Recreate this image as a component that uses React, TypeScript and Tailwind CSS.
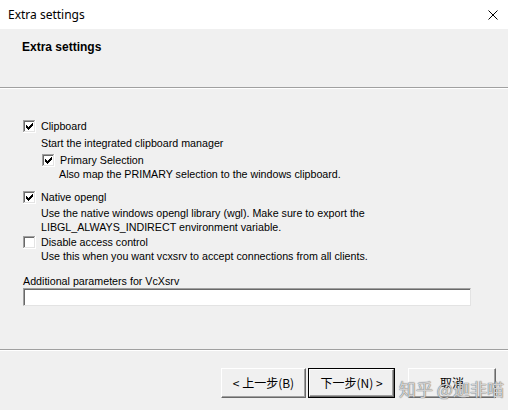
import type { ReactNode } from 'react'

const body = "font-['Liberation_Sans',Arial,sans-serif] text-[10.7px] text-black"

function CheckBox({ checked }: { checked: boolean }) {
  // classic sunken 13x13 checkbox with pixel tick
  const tick: [number, number][] = [
    [9, 3],
    [8, 4], [9, 4],
    [3, 5], [7, 5], [8, 5], [9, 5],
    [3, 6], [4, 6], [6, 6], [7, 6], [8, 6],
    [3, 7], [4, 7], [5, 7], [6, 7], [7, 7],
    [4, 8], [5, 8], [6, 8],
    [5, 9],
  ]
  return (
    <svg width="13" height="13" viewBox="0 0 13 13" shapeRendering="crispEdges" className="shrink-0">
      <rect x="0" y="0" width="13" height="13" fill="#ffffff" />
      <rect x="0" y="0" width="12" height="1" fill="#a0a0a0" />
      <rect x="0" y="0" width="1" height="12" fill="#a0a0a0" />
      <rect x="1" y="1" width="10" height="1" fill="#696969" />
      <rect x="1" y="1" width="1" height="10" fill="#696969" />
      <rect x="1" y="11" width="11" height="1" fill="#e3e3e3" />
      <rect x="11" y="1" width="1" height="11" fill="#e3e3e3" />
      {checked && tick.map(([x, y]) => <rect key={`${x}-${y}`} x={x} y={y} width="1" height="1" fill="#000" />)}
    </svg>
  )
}

function CheckRow({ checked, label, className = '' }: { checked: boolean; label: string; className?: string }) {
  return (
    <div className={`flex items-center h-[13px] ${className}`}>
      <CheckBox checked={checked} />
      <span className="ml-[5px] leading-[13px] whitespace-nowrap">{label}</span>
    </div>
  )
}

function Line({ children, className = '' }: { children: ReactNode; className?: string }) {
  return <div className={`leading-[14px] h-[14px] whitespace-nowrap ${className}`}>{children}</div>
}

function WinButton({ children, isDefault = false, width }: { children: ReactNode; isDefault?: boolean; width: string }) {
  return (
    <div className={`${width} h-[30px] ${isDefault ? 'border border-black' : ''}`}>
      <div className="h-full w-full border border-t-white border-l-white border-r-[#696969] border-b-[#696969] bg-[#f0f0f0] shadow-[inset_-1px_-1px_0_#a0a0a0] flex items-center justify-center font-['Noto_Sans_CJK_SC',sans-serif] text-[12px] text-black whitespace-pre">
        {children}
      </div>
    </div>
  )
}

export default function App() {
  return (
    <div className="relative w-[508px] h-[410px] bg-[#f0f0f0] overflow-hidden flex flex-col">
      {/* Title bar */}
      <div className="h-[29px] bg-white flex items-center justify-between pl-2 pr-[10px] shrink-0">
        <span className="font-['Noto_Sans',sans-serif] text-[12px] text-black">Extra settings</span>
        <svg width="10" height="10" viewBox="0 0 10 10">
          <path d="M0.5 0.5 L9.5 9.5 M9.5 0.5 L0.5 9.5" stroke="#000" strokeWidth="1" />
        </svg>
      </div>

      {/* Header */}
      <div className="h-[58px] shrink-0 pl-[22px] pt-[11px]">
        <div className="font-['Liberation_Sans',Arial,sans-serif] font-bold text-[12px] leading-[14px] text-black">
          Extra settings
        </div>
      </div>
      <div className="h-[2px] shrink-0 border-t border-t-[#a0a0a0] border-b border-b-white" />

      {/* Content */}
      <div className={`h-[260px] shrink-0 pl-[23px] pt-[31px] ${body}`}>
        <CheckRow checked label="Clipboard" />
        <Line className="ml-[18px] mt-[3px]">Start the integrated clipboard manager</Line>
        <CheckRow checked label="Primary Selection" className="ml-[19px] mt-[4px]" />
        <Line className="ml-[36px]">Also map the PRIMARY selection to the windows clipboard.</Line>
        <CheckRow checked label="Native opengl" className="mt-[10px]" />
        <Line className="ml-[18px] mt-[2px]">Use the native windows opengl library (wgl). Make sure to export the</Line>
        <Line className="ml-[18px]">LIBGL_ALWAYS_INDIRECT environment variable.</Line>
        <CheckRow checked={false} label="Disable access control" className="mt-[2px]" />
        <Line className="ml-[18px]">Use this when you want vcxsrv to accept connections from all clients.</Line>
        <Line className="mt-[11px]">Additional parameters for VcXsrv</Line>
        <div className="w-[448px] h-[18px] bg-white border border-t-[#a0a0a0] border-l-[#a0a0a0] border-r-[#e3e3e3] border-b-[#e3e3e3] shadow-[inset_1px_1px_0_#696969]" />
      </div>

      <div className="h-[2px] shrink-0 border-t border-t-[#a0a0a0] border-b border-b-white" />

      {/* Footer buttons */}
      <div className="flex-1 flex justify-end items-start pt-[17px] pr-[12px]">
        <WinButton width="w-[85px]">{'< 上一步(B)'}</WinButton>
        <div className="ml-[2px]">
          <WinButton width="w-[87px]" isDefault>{'下一步(N) >'}</WinButton>
        </div>
        <div className="ml-[13px]">
          <WinButton width="w-[88px]">取消</WinButton>
        </div>
      </div>

      {/* Watermark overlay */}
      <div className="absolute left-[399px] top-[379px] font-['Noto_Sans_CJK_SC',sans-serif] text-[17px] leading-[20px] text-white/70 whitespace-nowrap [text-shadow:0_0_1px_#6b6b6b,0_0_1px_#6b6b6b]">
        知乎 @迦非喵
      </div>
    </div>
  )
}
